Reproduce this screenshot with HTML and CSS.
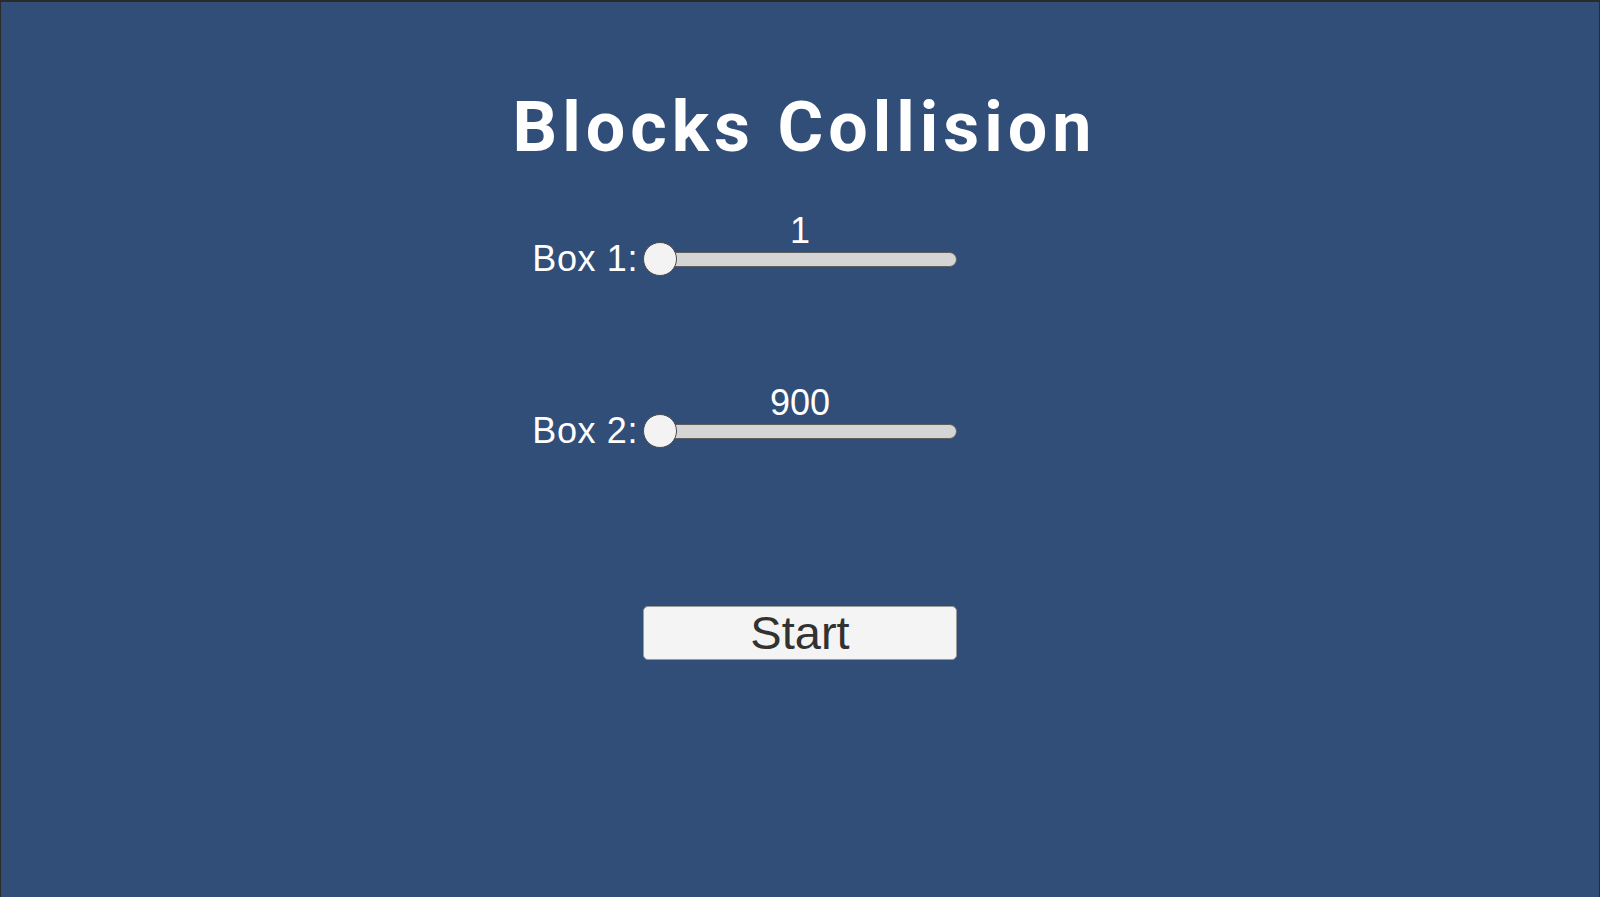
FILE: index.html
```html
<!DOCTYPE html>
<html lang="en">
<head>
<meta charset="utf-8">
<title>Blocks Collision</title>
<link rel="stylesheet" href="styles.css">
</head>
<body>
<div class="screen">
  <h1 class="title">Blocks Collision</h1>

  <div class="row row-first">
    <div class="label">Box 1:</div>
    <div class="slider">
      <div class="value">1</div>
      <div class="track-wrap">
        <div class="knob"></div>
        <div class="track"></div>
      </div>
    </div>
  </div>

  <div class="row row-second">
    <div class="label">Box 2:</div>
    <div class="slider">
      <div class="value">900</div>
      <div class="track-wrap">
        <div class="knob"></div>
        <div class="track"></div>
      </div>
    </div>
  </div>

  <button class="start">Start</button>
</div>
</body>
</html>
```

FILE: styles.css
```css
html, body {
  margin: 0;
  padding: 0;
  background: #314e79;
}

.screen {
  box-sizing: border-box;
  width: 1600px;
  height: 897px;
  background: #314e79;
  border-top: 2px solid #2a2a2a;
  border-left: 1px solid #2a2a2a;
  border-right: 1px solid #2a2a2a;
  display: flex;
  flex-direction: column;
  align-items: center;
  padding-top: 90px;
  font-family: "Liberation Sans", Arial, sans-serif;
  color: #ffffff;
}

.title {
  margin: 0;
  font-family: Roboto, "Liberation Sans", sans-serif;
  font-weight: 700;
  font-size: 70px;
  line-height: 70px;
  letter-spacing: 5px;
  padding-left: 9px;
  color: #ffffff;
}

.row {
  width: 100%;
  display: grid;
  grid-template-columns: 1fr 314px 1fr;
}

.row-first {
  margin-top: 56px;
}

.row-second {
  margin-top: 114px;
}

.label {
  grid-column: 1;
  justify-self: end;
  align-self: end;
  margin-right: 5px;
  font-size: 36px;
  line-height: 34px;
  height: 34px;
  letter-spacing: 0.6px;
  white-space: nowrap;
}

.slider {
  grid-column: 2;
  display: flex;
  flex-direction: column;
}

.value {
  text-align: center;
  font-size: 36px;
  line-height: 26px;
  height: 26px;
}

.track-wrap {
  margin-top: -2px;
  height: 34px;
  display: flex;
  align-items: center;
}

.knob {
  position: relative;
  z-index: 1;
  flex: none;
  box-sizing: border-box;
  width: 34px;
  height: 34px;
  border-radius: 50%;
  background: #f3f3f3;
  border: 1px solid #4a4a4a;
}

.track {
  flex: 1;
  box-sizing: border-box;
  height: 15px;
  margin-left: -17px;
  border-radius: 8px;
  background: #d5d5d5;
  border: 1px solid #5e5e5e;
}

.start {
  margin-top: 158px;
  box-sizing: border-box;
  width: 314px;
  height: 54px;
  padding: 0;
  border: 1px solid #9a9a9a;
  border-radius: 5px;
  background: #f4f4f4;
  color: #323232;
  font-family: "Liberation Sans", Arial, sans-serif;
  font-size: 47px;
  line-height: 52px;
  display: flex;
  align-items: center;
  justify-content: center;
}
```
